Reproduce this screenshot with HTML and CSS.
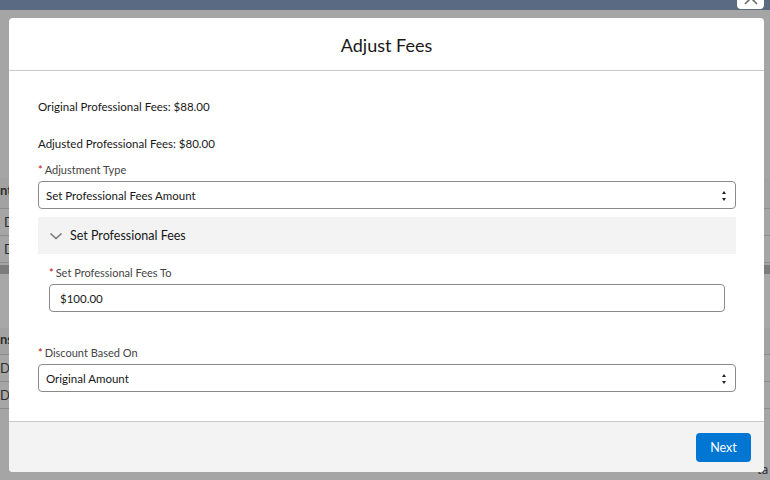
FILE: index.html
```html
<!DOCTYPE html>
<html>
<head>
<meta charset="utf-8">
<link rel="stylesheet" href="styles.css">
</head>
<body>
<div class="page">
  <div class="topbar"></div>
  <div class="bg">
    <div class="bg-row bg-head"><span>ntr</span></div>
    <div class="bg-row"><span class="d">D</span></div>
    <div class="bg-row"><span class="d">D</span></div>
    <div class="bg-band"></div>
    <div class="bg-gap"></div>
    <div class="bg-row bg-head2"><span>ns</span></div>
    <div class="bg-row"><span>De</span></div>
    <div class="bg-row"><span>De</span></div>
    <div class="bg-rest"><span class="ta">ta</span></div>
  </div>
</div>

<div class="modal">
  <button class="close" aria-label="Close">
    <svg width="14" height="14" viewBox="0 0 14 14"><path d="M1 1 L13 13 M13 1 L1 13" stroke="#6b6b6b" stroke-width="1.6" fill="none"/></svg>
  </button>
  <div class="modal-header"><h2>Adjust Fees</h2></div>
  <div class="modal-body">
    <p class="info">Original Professional Fees: $88.00</p>
    <p class="info info2">Adjusted Professional Fees: $80.00</p>
    <div class="field">
      <label><abbr>*</abbr>Adjustment Type</label>
      <div class="select"><span>Set Professional Fees Amount</span><i class="arrows"></i></div>
    </div>
    <div class="section">
      <div class="section-head">
        <svg width="14" height="10" viewBox="0 0 14 10"><path d="M1.5 2.5 L7 7.5 L12.5 2.5" stroke="#747474" stroke-width="1.5" fill="none"/></svg>
        <span>Set Professional Fees</span>
      </div>
      <div class="section-body">
        <div class="field">
          <label><abbr>*</abbr>Set Professional Fees To</label>
          <div class="input">$100.00</div>
        </div>
      </div>
    </div>
    <div class="field field-last">
      <label><abbr>*</abbr>Discount Based On</label>
      <div class="select"><span>Original Amount</span><i class="arrows"></i></div>
    </div>
  </div>
  <div class="modal-footer">
    <button class="btn">Next</button>
  </div>
</div>
</body>
</html>
```

FILE: styles.css
```css
* { box-sizing: border-box; }
html, body { margin: 0; padding: 0; }
body {
  width: 770px;
  height: 480px;
  overflow: hidden;
  background: #a5a5a5;
  font-family: "Lato", "Open Sans", sans-serif;
  color: #181818;
  position: relative;
}
.page { width: 770px; height: 480px; }
.topbar {
  height: 10px;
  background: #5b6a83;
}
.bg { padding-top: 168px; }
.bg-row {
  height: 27px;
  border-bottom: 1px solid #8c8c8c;
  background: #a6a6a6;
  font-size: 13px;
  color: #2e2e2e;
  line-height: 26px;
}
.bg-row span { display: inline-block; }
.bg-row .d { margin-left: 4px; }
.bg-head { height: 31px; line-height: 24px; font-weight: bold; background: #a2a2a2; }
.bg-band { height: 9px; margin-top: 2px; background: #7c7c7c; }
.bg-gap { height: 54px; background: #a8a8a8; }
.bg-head2 { height: 27px; font-weight: bold; background: #a2a2a2; line-height: 22px; }
.bg-rest { height: 80px; position: relative; }
.ta { position: absolute; left: 757px; top: 52px; font-size: 13px; color: #2e2e2e; }

.modal {
  position: absolute;
  left: 9px;
  top: 18px;
  width: 755px;
  height: 454px;
  background: #fff;
  border-radius: 4px;
  display: flex;
  flex-direction: column;
}
.close {
  position: absolute;
  right: 0;
  top: -37px;
  width: 27px;
  height: 28px;
  border: 0;
  border-radius: 4px;
  background: #fff;
  padding: 0 0 4px 0;
  display: flex;
  align-items: flex-end;
  justify-content: center;
}
.modal-header {
  height: 53px;
  border-bottom: 1px solid #c9c9c9;
  display: flex;
  align-items: center;
  justify-content: center;
}
.modal-header h2 {
  margin: 0;
  font-weight: 400;
  font-size: 18px;
  color: #181818;
  padding-top: 1px;
}
.modal-body {
  flex: 1;
  padding: 27px 28px 0 29px;
}
.info {
  margin: 0;
  font-size: 11.5px;
  line-height: 18px;
  color: #181818;
}
.info2 { margin-top: 19px; }
.field { margin-top: 9px; }
.field label {
  display: block;
  font-size: 11px;
  line-height: 16px;
  color: #444;
  margin-bottom: 3px;
}
abbr {
  color: #ba0517;
  text-decoration: none;
  margin-right: 2px;
}
.select, .input {
  height: 28px;
  border: 1px solid #8a8a8a;
  border-radius: 4px;
  background: #fff;
  display: flex;
  align-items: center;
  padding-left: 7px;
  font-size: 11.5px;
  color: #181818;
  position: relative;
}
.input { padding-left: 10px; }
.arrows {
  position: absolute;
  right: 8px;
  top: 9px;
  width: 5px;
  height: 10px;
}
.arrows::before, .arrows::after {
  content: "";
  position: absolute;
  left: 0;
  border-left: 2.5px solid transparent;
  border-right: 2.5px solid transparent;
}
.arrows::before { top: 0; border-bottom: 3px solid #222; }
.arrows::after { bottom: 0; border-top: 3px solid #222; }
.section { margin-top: 8px; }
.section-head {
  height: 37px;
  background: #f3f3f3;
  display: flex;
  align-items: center;
  padding-left: 11px;
  gap: 7px;
  font-size: 12.5px;
  color: #181818;
}
.section-body { padding: 2px 11px 0 11px; }
.field-last { margin-top: 33px; }
.modal-footer {
  height: 51px;
  border-top: 1px solid #c9c9c9;
  background: #f3f3f3;
  border-radius: 0 0 4px 4px;
  display: flex;
  justify-content: flex-end;
  align-items: flex-start;
  padding: 11px 13px 0 0;
}
.btn {
  height: 29px;
  width: 55px;
  padding: 0;
  border: 0;
  border-radius: 4px;
  background: #0176d3;
  color: #fff;
  font-family: inherit;
  font-size: 12.5px;
}
```
